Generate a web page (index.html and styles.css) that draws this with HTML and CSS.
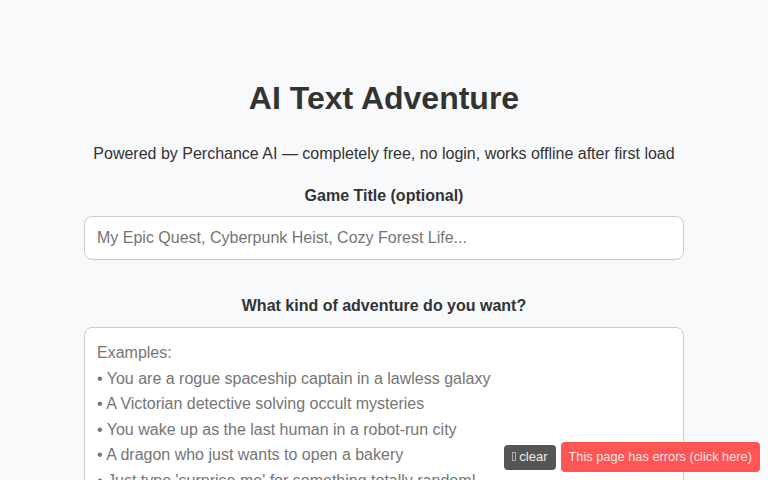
FILE: index.html
```html
<!DOCTYPE html>
<html lang="en">
<head>
    <meta charset="UTF-8">
    <meta name="viewport" content="width=device-width, initial-scale=1.0">
    <title>AI Text Adventure</title>
    <link rel="stylesheet" href="styles.css">
</head>
<body>
    <div class="setup">
        <h1>AI Text Adventure</h1>
        <p class="intro">Powered by Perchance AI — completely free, no login, works offline after first load</p>

        <label for="title">Game Title (optional)</label>
        <input type="text" id="title" placeholder="My Epic Quest, Cyberpunk Heist, Cozy Forest Life...">

        <label for="prompt" class="second">What kind of adventure do you want?</label>
        <textarea id="prompt" rows="8" placeholder="Examples:
• You are a rogue spaceship captain in a lawless galaxy
• A Victorian detective solving occult mysteries
• You wake up as the last human in a robot-run city
• A dragon who just wants to open a bakery
• Just type 'surprise me' for something totally random!"></textarea>
    </div>

    <div class="error-bar">
        <button class="clear-btn"><span class="missing-glyph"></span>clear</button>
        <button class="error-btn">This page has errors (click here)</button>
    </div>
</body>
</html>
```

FILE: styles.css
```css
body {
    font-family: "Liberation Sans", Arial, sans-serif;
    font-size: 16px;
    line-height: 1.6;
    margin: 0;
    padding: 0 20px;
    background: #f8f9fb;
    color: #333;
}
.setup {
    max-width: 600px;
    margin: 0 auto;
    padding-top: 73px;
    text-align: center;
}
h1 {
    font-size: 32px;
    margin: 0 0 17px 0;
}
.intro {
    margin: 0 0 16px 0;
}
label {
    display: block;
    font-weight: bold;
    margin-bottom: 8px;
}
label.second {
    margin-top: 33px;
}
input, textarea {
    display: block;
    box-sizing: border-box;
    width: 100%;
    padding: 12px;
    font-family: inherit;
    font-size: 16px;
    line-height: 1.6;
    color: #333;
    background: white;
    border: 1px solid #ccc;
    border-radius: 8px;
}
input {
    height: 44px;
}
textarea {
    height: 230px;
    resize: vertical;
}
.error-bar {
    position: fixed;
    right: 8px;
    bottom: 8px;
    display: flex;
    align-items: center;
    gap: 5px;
}
.clear-btn, .error-btn {
    border: none;
    font-family: inherit;
    line-height: 15px;
    border-radius: 4px;
    padding: 0 8px 1px 8px;
}
.clear-btn {
    height: 25px;
    font-size: 13px;
    background: #555;
    color: #eee;
}
.missing-glyph {
    display: inline-block;
    box-sizing: border-box;
    width: 4px;
    height: 9px;
    margin-right: 3px;
    border: 1px solid #aaa;
}
.error-btn {
    height: 30px;
    font-size: 12.8px;
    background: #f55;
    color: #ffe6e6;
}
```
